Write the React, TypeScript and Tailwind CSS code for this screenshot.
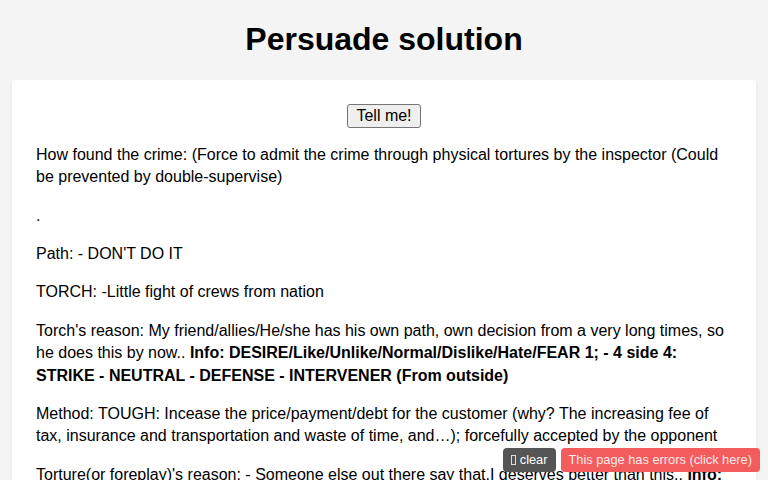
import { useState } from "react"

const PARAGRAPHS: { text: string; bold?: string }[] = [
  {
    text: "How found the crime: (Force to admit the crime through physical tortures by the inspector (Could be prevented by double-supervise)",
  },
  { text: "." },
  { text: "Path: - DON'T DO IT" },
  { text: "TORCH: -Little fight of crews from nation" },
  {
    text: "Torch's reason: My friend/allies/He/she has his own path, own decision from a very long times, so he does this by now.. ",
    bold: "Info: DESIRE/Like/Unlike/Normal/Dislike/Hate/FEAR 1; - 4 side 4: STRIKE - NEUTRAL - DEFENSE - INTERVENER (From outside)",
  },
  {
    text: "Method: TOUGH: Incease the price/payment/debt for the customer (why? The increasing fee of tax, insurance and transportation and waste of time, and…); forcefully accepted by the opponent",
  },
  {
    text: "Torture(or foreplay)'s reason: - Someone else out there say that.I deserves better than this.. ",
    bold: "Info: DESIRE/Like/Unlike/Normal/Dislike/Hate/FEAR 2; - 4 side 4: STRIKE - NEUTRAL - DEFENSE - INTERVENER (From inside)",
  },
]

export default function App() {
  const [shown, setShown] = useState(true)

  return (
    <div className="flow-root min-h-screen bg-[#f4f4f4] font-['Liberation_Sans',Arial,sans-serif] text-black">
      <h1 className="my-[0.67em] text-center text-[32px] font-bold leading-[normal]">Persuade solution</h1>

      <div className="mx-3 rounded bg-white p-6 shadow-[0_1px_3px_rgba(0,0,0,0.08)]">
        <div className="text-center leading-[0]">
          <button
            onClick={() => setShown(!shown)}
            className="rounded-[3px] border border-[#767676] bg-[#efefef] px-2 py-0.5 text-base leading-[normal] text-black"
          >
            Tell me!
          </button>
        </div>

        {shown &&
          PARAGRAPHS.map((p, i) => (
            <p key={i} className="my-4 text-base leading-[1.4]">
              {p.text}
              {p.bold && <b>{p.bold}</b>}
            </p>
          ))}
      </div>

      {/* error overlay */}
      <div className="fixed bottom-2 right-2 flex gap-[5px] text-[12.8px] leading-6">
        <button className="flex items-center gap-[4px] rounded bg-[#555] px-2 text-white">
          <span className="inline-block h-[10px] w-[5px] border border-white/80" />
          clear
        </button>
        <button className="rounded bg-[#f25c5c] px-2 text-[#ffeaea]">This page has errors (click here)</button>
      </div>
    </div>
  )
}
